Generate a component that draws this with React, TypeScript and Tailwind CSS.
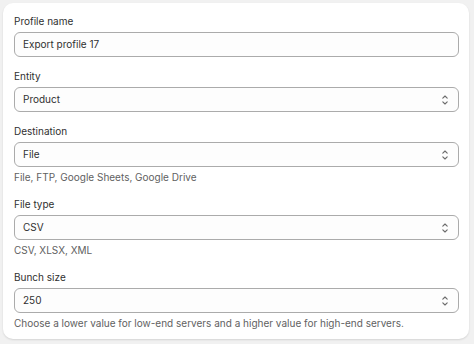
import React from "react";

const SelectIcon = () => (
  <svg width="10" height="14" viewBox="0 0 10 14" fill="none" className="shrink-0">
    <path d="M2.8 5.2L5 3L7.2 5.2" stroke="#6b6b6b" strokeWidth="1.1" strokeLinecap="round" strokeLinejoin="round" />
    <path d="M2.8 8.8L5 11L7.2 8.8" stroke="#6b6b6b" strokeWidth="1.1" strokeLinecap="round" strokeLinejoin="round" />
  </svg>
);

type Field = {
  label: string;
  value: string;
  select?: boolean;
  help?: string;
};

const fields: Field[] = [
  { label: "Profile name", value: "Export profile 17" },
  { label: "Entity", value: "Product", select: true },
  { label: "Destination", value: "File", select: true, help: "File, FTP, Google Sheets, Google Drive" },
  { label: "File type", value: "CSV", select: true, help: "CSV, XLSX, XML" },
  {
    label: "Bunch size",
    value: "250",
    select: true,
    help: "Choose a lower value for low-end servers and a higher value for high-end servers.",
  },
];

const App = () => {
  return (
    <div className="w-[474px] h-[344px] bg-[#f1f1f1] p-[3px] font-['Inter',sans-serif]">
      <div className="w-[466px] h-[336px] bg-white rounded-[10px] shadow-[0_1px_2px_rgba(0,0,0,0.12)] pt-[10px] pb-[8px] pl-[11px] pr-[10px] flex flex-col gap-[11px]">
        {fields.map((f) => (
          <div key={f.label} className="flex flex-col">
            {/* LABEL */}
            <div className="text-[10px] leading-[16px] text-[#303030]">{f.label}</div>
            {/* INPUT */}
            <div className="mt-[3px] h-[25px] rounded-[6px] border border-[#ababab] bg-[#fdfdfd] pl-[8px] pr-[8px] flex items-center justify-between">
              <span className="text-[10px] text-[#303030]">{f.value}</span>
              {f.select && <SelectIcon />}
            </div>
            {f.help && (
              <div className="mt-[2px] text-[10px] leading-[16px] text-[#616161]">{f.help}</div>
            )}
          </div>
        ))}
      </div>
    </div>
  );
};

export default App;
